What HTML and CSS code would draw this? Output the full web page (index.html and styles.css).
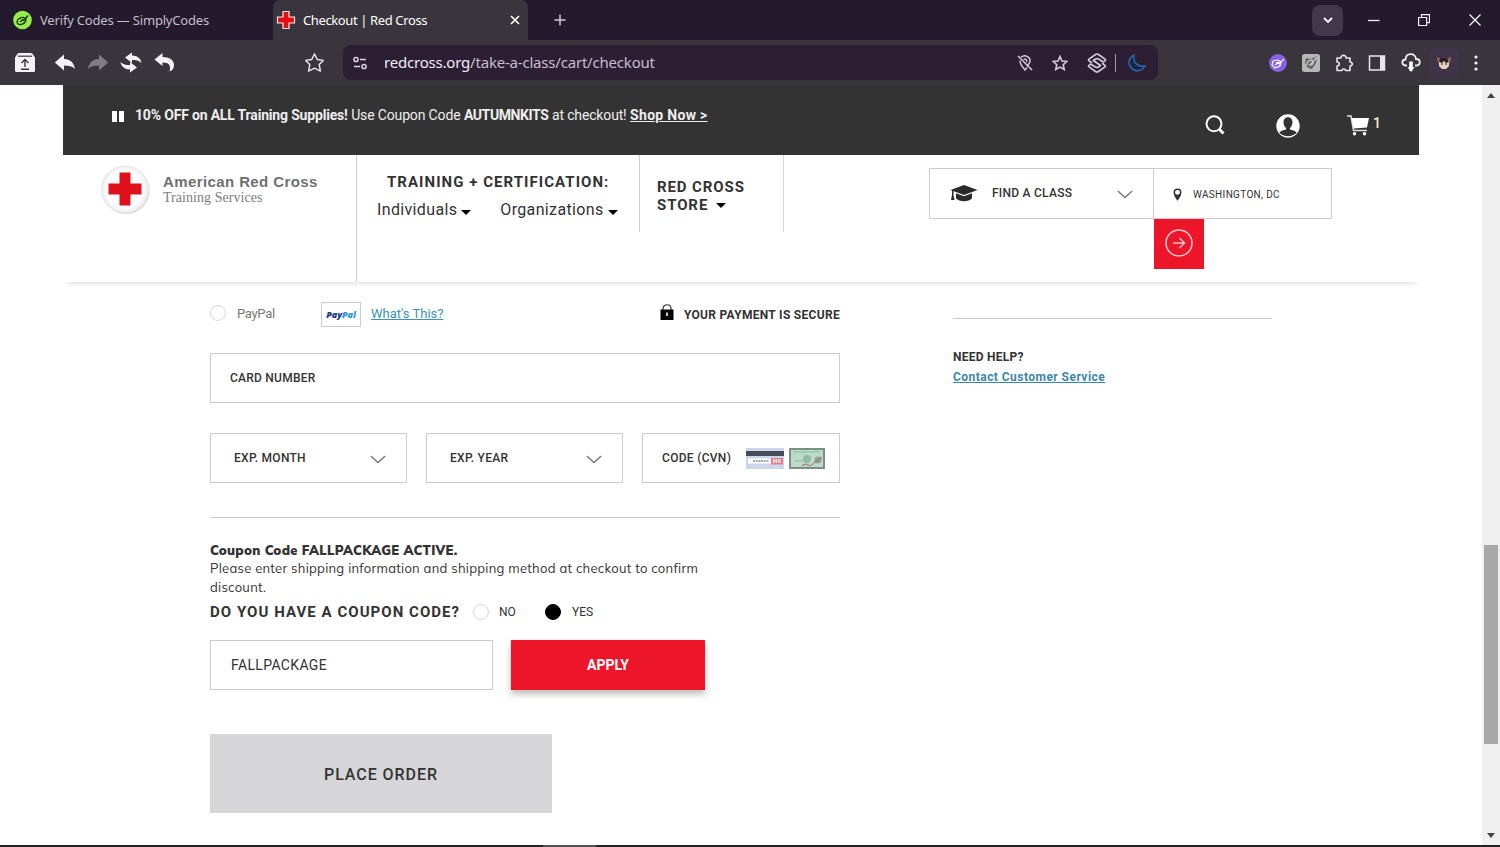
FILE: index.html
```html
<!DOCTYPE html>
<html lang="en">
<head>
<meta charset="utf-8">
<title>Checkout | Red Cross</title>
<link rel="stylesheet" href="styles.css">
</head>
<body>
<div class="window">
  <div class="tabs">
    <div class="tab tab-idle">
      <svg width="20" height="20" viewBox="0 0 20 20"><circle cx="10.500" cy="10" r="9.300" fill="#9aeb4e"/><g fill="none" stroke="#1c3a1c" stroke-width="1.500"><ellipse cx="9.500" cy="11" rx="4.600" ry="3.200" transform="rotate(-25 9.500 11)"/><path d="M8 12l3-2.500 1 1 4-5"/></g></svg>
      <span class="t-simply">Verify Codes — SimplyCodes</span>
    </div>
    <div class="tab tab-active">
      <svg width="20" height="20" viewBox="0 0 20 20"><path d="M7 1.500h6v5.500h5.500v6H13v5.500H7V13H1.500V7H7z" fill="#e80d12" stroke="#fbe9e4" stroke-width="1.200"/></svg>
      <span class="t-check">Checkout | Red Cross</span>
      <svg class="tab-x" width="10" height="10" viewBox="0 0 10 10"><path d="M1 1l8 8M9 1L1 9" stroke="#fff" stroke-width="1.700"/></svg>
    </div>
    <svg class="plus" width="12" height="12" viewBox="0 0 12 12"><path d="M6 .5v11M.5 6h11" stroke="#d0cbd5" stroke-width="1.500"/></svg>
    <div class="controls">
      <span class="tabsearch"><svg width="12" height="8" viewBox="0 0 12 8"><path d="M2 2l4 4 4-4" fill="none" stroke="#fff" stroke-width="1.800"/></svg></span>
      <svg class="min" width="12" height="12" viewBox="0 0 12 12"><path d="M0 6.500h11.500" stroke="#eee" stroke-width="1.300"/></svg>
      <svg class="max" width="12" height="12" viewBox="0 0 12 12"><path d="M.6 3.500h8v8h-8zM3.500 3.500V.7h8v8H8.800" fill="none" stroke="#f5f5f5" stroke-width="1.200"/></svg>
      <svg class="cls" width="12" height="12" viewBox="0 0 12 12"><path d="M.5.5l11 11M11.500.5l-11 11" stroke="#f5f5f5" stroke-width="1.300"/></svg>
    </div>
  </div>
  <div class="toolbar">
    <svg class="ti g-first" viewBox="0 0 22 22"><path d="M5 1h12q1.500 0 2 1.500L21 5.500V18.500q0 1.500-1.500 1.500h-17Q1 20 1 18.500v-13L3 2.500Q3.500 1 5 1z" fill="#f5f2f7"/><path d="M4 4.200h14" stroke="#3a353c" stroke-width="1.200"/><path d="M11 15V8M7.500 11L11 7.500l3.500 3.500M7 17.300h8" fill="none" stroke="#3a353c" stroke-width="1.400"/></svg>
    <svg class="ti g-back" viewBox="0 0 22 22"><path d="M.8 10.500L10 2.500v4.500c6 0 10 3.500 11 10-2.500-2.800-6-3.500-11-3.500v5z" fill="#f5f2f7"/></svg>
    <svg class="ti g-fwd" viewBox="0 0 22 22"><path d="M21.200 10.500L12 2.500v4.500c-6 0-10 3.500-11 10 2.500-2.800 6-3.500 11-3.500v5z" fill="#817c84"/></svg>
    <svg class="ti g-reload" viewBox="0 0 22 22" fill="#f5f2f7"><path d="M5 5.500L12 .5v3c5.500.2 9 3 9.500 7.500C19 8.500 16 8 12 8v3z"/><path d="M17 15.500L10 20.500v-3c-5.500-.2-9-3-9.500-7.500C3 12.500 6 13 10 13v-3z"/></svg>
    <svg class="ti g-undo" viewBox="0 0 22 22"><path d="M.5 7.500L8.500 1v4c7 0 11.500 3 11.500 8 0 3.500-1.500 5.500-4.500 6.500 1.500-6 0-9-7-9v3.500z" fill="#f5f2f7"/></svg>
    <svg class="ti g-star" viewBox="0 0 22 22"><path d="M11 2l2.900 5.900 6.300.9-4.300 4.300 1.300 6.900L11 17l-6.200 3 1.300-6.900-4.300-4.300 6.300-.9z" fill="none" stroke="#eae6ed" stroke-width="1.500" stroke-linejoin="round"/></svg>
    <div class="url">
      <svg class="tune" width="14" height="14" viewBox="0 0 14 14" fill="none" stroke="#d9d1e0" stroke-width="1.500"><circle cx="3" cy="3.500" r="2.100"/><path d="M7 3.500h6M1 10.500h6"/><circle cx="11" cy="10.500" r="2.100"/></svg>
      <span class="addr"><b>redcross.org</b>/take-a-class/cart/checkout</span>
      <span class="url-icons">
        <svg width="16" height="18" viewBox="0 0 16 18" fill="none" stroke="#d3cadb" stroke-width="1.500"><path d="M4 3.200C8 0 13.500 3 13 7.200c-.3 2-1.500 3.700-3 5.300M3 6.500c0 4 2.500 6.500 5 9.500l2-2.500"/><path d="M6.500 5.500c2-1.500 4 .5 3 2.500M1 2l14 14"/></svg>
        <svg width="16" height="16" viewBox="0 0 22 22"><path d="M11 2l2.700 6.300 6.800.6-5.100 4.500 1.500 6.600L11 16.600 5.100 20l1.500-6.600L1.500 8.900l6.800-.6z" fill="none" stroke="#d3cadb" stroke-width="2.200"/></svg>
        <svg width="20" height="20" viewBox="0 0 20 20" fill="none" stroke="#d3cadb" stroke-width="1.600" stroke-linejoin="round" stroke-linecap="round"><path d="M4.500 9.500L2 7.800q-1-.8 0-1.600L8.500 1.500q1.500-.9 3 0L18 6.200q1 .8 0 1.600L16.500 9 11.500 6q-1.500-.8-3 0L6.500 7.500"/><path d="M15.500 10.500L18 12.300q1 .8 0 1.600l-6.500 4.600q-1.500.9-3 0L2 13.900q-1-.8 0-1.600L3.500 11l5 3q1.500.8 3 0l2-1.500M6.500 7.500l7 5"/></svg>
        <i class="vline"></i>
        <svg class="moon" width="18" height="18" viewBox="0 0 18 18"><path d="M6 1.200C4.500 8 9 13 17 12c-2 4.500-7.500 6-11.800 3.500C-.5 12-.3 4 6 1.200z" fill="#18264a" stroke="#2c69aa" stroke-width="1.500"/></svg>
      </span>
    </div>
    <div class="ext">
      <svg width="18" height="18" viewBox="0 0 18 18"><circle cx="9" cy="9" r="9" fill="#8661e5"/><g fill="none" stroke="#fff" stroke-width="1.100"><path d="M4 7l5-1 3 2-1 4-5 2-3-3z"/><path d="M6 11l3-2 1 1 5-5M7 8.500h3"/></g></svg>
      <svg width="18" height="18" viewBox="0 0 18 18"><rect width="18" height="18" rx="2.500" fill="#b8b7b8"/><path d="M4 4l5 1 6-3-1 7-4 6-4-1-3-5z" fill="#646466"/><path d="M5 11c0-6 5-5 6-4s0 4-3 4l7-8" fill="none" stroke="#c4c4c4" stroke-width="1.500"/></svg>
      <svg width="18" height="18" viewBox="0 0 18 18"><path d="M2 4h4c-.5-3.500 5.500-3.500 5 0h4v4c3 0 3 4 0 4v4.500h-4.500c0-2-3.500-2-3.500 0H2V12c3 0 3-4 0-4z" fill="none" stroke="#e9e5ec" stroke-width="1.600" stroke-linejoin="round"/></svg>
      <svg width="18" height="18" viewBox="0 0 18 18"><path d="M1.500 2h15v14h-15z" fill="none" stroke="#e9e5ec" stroke-width="1.500"/><path d="M12 2h5v14h-5z" fill="#e9e5ec"/></svg>
      <svg width="20" height="20" viewBox="0 0 20 20"><path d="M6 12.500H4.500C0 12 .5 6.500 4.500 6.500 5-.5 14-.5 15 6c5 0 5 6.500 0 6.500h-1" fill="none" stroke="#eee" stroke-width="1.800"/><path d="M10 8.500v9" stroke="#fff" stroke-width="3.600"/><path d="M6.500 14h7L10 19z" fill="#fff"/></svg>
      <span class="avatar"><svg width="14" height="14" viewBox="0 0 14 14"><path d="M0 1l4 2h6l4-2-1 6H1z" fill="#a76550"/><path d="M3 2h7l2 5H2z" fill="#2b2029"/><path d="M2 6l3 1 2-2 2 2 3-1v4l-3 3H5l-3-3z" fill="#ead3bd"/><circle cx="5" cy="8" r=".8"/><circle cx="9" cy="8" r=".8"/></svg></span>
      <svg class="dots" width="4" height="16" viewBox="0 0 4 16" fill="#f4f4f4"><circle cx="2" cy="2" r="1.600"/><circle cx="2" cy="8" r="1.600"/><circle cx="2" cy="14" r="1.600"/></svg>
    </div>
  </div>
  <div class="view">
    <main class="page">
      <header class="site">
        <div class="promo">
          <i class="pause"></i>
          <p><b class="p1">10% OFF on ALL Training Supplies!</b> <span class="p2">Use Coupon Code</span> <b class="p3">AUTUMNKITS</b> <span class="p4">at checkout!</span> <a class="p5">Shop Now &gt;</a></p>
          <div class="acct">
            <svg width="20" height="20" viewBox="0 0 20 20" fill="none" stroke="#fff"><circle cx="9" cy="8.800" r="7.500" stroke-width="2"/><path d="M14 14l4.500 4.500" stroke-width="3"/></svg>
            <svg class="user" width="24" height="24" viewBox="0 0 24 24"><circle cx="12" cy="12" r="11.700" fill="#fff"/><path d="M7.500 8c0-6.500 9-6.500 9 0 0 3-1.200 5-2.500 6v1.500c2 .8 5.500 1 6.800 3.200C16 23.300 8 23.300 3.200 18.700c1.300-2.200 4.800-2.400 6.800-3.200V14C8.700 13 7.500 11 7.500 8z" fill="#333"/></svg>
            <svg class="cart" width="22" height="21" viewBox="0 0 22 21"><path d="M0 1h4l2.500 14.500H20" fill="none" stroke="#ddd" stroke-width="1.500"/><path d="M4.500 3H22l-2 9.500L6.500 13.500z" fill="#fff"/><circle cx="7.500" cy="18.700" r="1.700" fill="#fff"/><circle cx="17.500" cy="18.700" r="1.700" fill="#fff"/></svg>
            <span class="count">1</span>
          </div>
        </div>
        <div class="nav">
          <div class="brand">
            <svg width="52" height="52" viewBox="0 0 52 52"><defs><radialGradient id="disc"><stop offset=".75" stop-color="#fff"/><stop offset=".93" stop-color="#f0f0f0"/><stop offset="1" stop-color="#e4e4e4"/></radialGradient></defs><circle cx="27" cy="26.500" r="23.500" fill="#d4d4d4"/><circle cx="26" cy="25.300" r="24" fill="url(#disc)"/><path d="M20.500 8.500h11v11H42.500v11h-11v11h-11v-11H9.500v-11h11z" fill="#e0101a"/></svg>
            <div class="brand-text"><strong>American Red Cross</strong><span>Training Services</span></div>
          </div>
          <div class="training">
            <b>TRAINING + CERTIFICATION:</b>
            <div class="links"><span class="ind">Individuals<i class="caret"></i></span><span class="org">Organizations<i class="caret"></i></span></div>
          </div>
          <div class="store"><span>RED CROSS</span><span>STORE<i class="caret"></i></span></div>
          <div class="finder">
            <div class="find">
              <svg width="28" height="18" viewBox="0 0 28 18" fill="#2b2b2b"><path d="M14 1l13.500 5L14 11 .5 6z"/><path d="M6 9.200l8 3 8-3v5c-3 4-13 4-16 0zM2 6h1.500v5l1 5H1l1-5z"/></svg>
              <span>FIND A CLASS</span>
              <svg class="chev" width="16" height="9" viewBox="0 0 16 9"><path d="M.8 1L8 7.500 15.200 1" fill="none" stroke="#777" stroke-width="1.400"/></svg>
            </div>
            <div class="where">
              <svg width="9" height="13" viewBox="0 0 9 13"><path d="M4.500 1.200c4.500 0 4 5 0 10.300-4-5.300-4.500-10.300 0-10.300z" fill="#fff" stroke="#333" stroke-width="1.600"/><path d="M1.500 6.500h6l-3 5.500z" fill="#333"/></svg>
              <span>WASHINGTON, DC</span>
            </div>
            <div class="go"><svg width="28" height="28" viewBox="0 0 28 28" fill="none" stroke="#ffc9cd" stroke-width="1.500"><circle cx="14" cy="14" r="13"/><path d="M8 14h11.500M14.500 9l5 5-5 5"/></svg></div>
          </div>
        </div>
      </header>
      <div class="checkout">
        <section class="form">
          <div class="pay">
            <i class="radio"></i><span class="pp">PayPal</span>
            <span class="pplogo"><em>Pay</em><em class="pal">Pal</em></span>
            <a class="what">What's This?</a>
            <svg class="lock" width="14" height="16" viewBox="0 0 14 16"><path d="M3 7V4.500c0-5 8-5 8 0V7" fill="none" stroke="#333" stroke-width="1.200"/><path d="M.5 5.500h13V16H.5z"/><path d="M6.200 8.500h1.600V12H6.200z" fill="#fff"/></svg>
            <b class="secure">YOUR PAYMENT IS SECURE</b>
          </div>
          <div class="field card"><span>CARD NUMBER</span></div>
          <div class="trio">
            <div class="field exp"><span class="em">EXP. MONTH</span><svg width="16" height="9" viewBox="0 0 16 9"><path d="M.8 1L8 7.500 15.200 1" fill="none" stroke="#777" stroke-width="1.400"/></svg></div>
            <div class="field exp"><span class="ey">EXP. YEAR</span><svg width="16" height="9" viewBox="0 0 16 9"><path d="M.8 1L8 7.500 15.200 1" fill="none" stroke="#777" stroke-width="1.400"/></svg></div>
            <div class="field cvn"><span>CODE (CVN)</span>
              <svg width="38" height="21" viewBox="0 0 38 21"><path fill="#cbd6ec" d="M0 0h38v21H0z"/><path fill="#454b57" d="M0 3h38v5H0z"/><path fill="#fff" d="M2 10.500h23v5H2z"/><path d="M7 13h16" stroke="#888" stroke-width="1.500" stroke-dasharray="2 .7"/><path fill="#df7f87" d="M25 10h12v6.500H25z"/><path d="M27 13h8" stroke="#fff" stroke-width="3.500" stroke-dasharray="1.500 1"/></svg>
              <svg class="amex" width="36" height="21" viewBox="0 0 36 21"><path fill="#bcdcc9" stroke="#7b9187" stroke-width="2" d="M1 1h34v19H1z"/><path d="M4 4h27M6 13h8" stroke="#8fb3a0"/><circle cx="18" cy="11" r="4" fill="#92b9a3"/><circle cx="29" cy="12" r="3.500" fill="#88a596"/><path d="M13 18q3-3 6-1t6-2l4-3 4-3" fill="none" stroke="#b17d78" stroke-width="1.200"/></svg>
            </div>
          </div>
          <hr>
          <div class="notice"><b>Coupon Code FALLPACKAGE ACTIVE.</b><span class="n1">Please enter shipping information and shipping method at checkout to confirm</span><span class="n2">discount.</span></div>
          <div class="ask"><b>DO YOU HAVE A COUPON CODE?</b><i class="radio"></i><span class="no">NO</span><i class="radio on"></i><span class="yes">YES</span></div>
          <div class="apply-row"><div class="field code"><span>FALLPACKAGE</span></div><div class="apply"><span>APPLY</span></div></div>
          <div class="place"><span>PLACE ORDER</span></div>
        </section>
        <aside><b>NEED HELP?</b><a>Contact Customer Service</a></aside>
      </div>
    </main>
    <div class="scroll"><i class="up"></i><i class="thumb"></i><i class="down"></i></div>
  </div>
  <div class="taskline"></div>
</div>
</body>
</html>
```
FILE: styles.css
```css
* { box-sizing: border-box; }
body { margin: 0; overflow: hidden; font-family: Roboto, "Liberation Sans", sans-serif; color: #333; }
svg { display: block; flex: none; }
i { display: block; flex: none; }
span, b, a, strong, p { white-space: nowrap; }
.window { width: 1500px; height: 847px; display: flex; flex-direction: column; background: #fff; }

.tabs { height: 40px; background: #231a2d; display: flex; align-items: center; font-family: "Noto Sans", sans-serif; font-size: 13px; }
.tab { display: flex; align-items: center; height: 40px; }
.tab-idle { width: 273px; padding-left: 12px; gap: 8px; color: #c4bfc9; }
.tab-active { width: 255px; padding-left: 3px; gap: 7px; background: #3a353c; border-radius: 7px 7px 0 0; color: #fff; }
.t-simply { letter-spacing: -.18px; }
.t-check { letter-spacing: -.38px; }
.tab-x { margin-left: auto; margin-right: 8px; }
.plus { margin-left: 26px; }
.controls { margin-left: auto; display: flex; align-items: center; }
.tabsearch { width: 31px; height: 31px; border-radius: 8px; background: #42384c; display: grid; place-items: center; }
.min { margin-left: 25px; }
.max { margin-left: 38px; }
.cls { margin-left: 39px; margin-right: 19px; }

.toolbar { height: 45px; background: #3a353c; display: flex; align-items: center; }
.ti { width: 22px; height: 22px; }
.g-first { margin-left: 14px; }
.g-back { margin-left: 18px; }
.g-fwd { margin-left: 11px; }
.g-reload { margin-left: 11px; }
.g-undo { margin-left: 12px; }
.g-star { margin-left: 128px; width: 21px; height: 21px; }
.url { margin-left: 18px; width: 815px; height: 35px; border-radius: 8px; background: #2c1f34; display: flex; align-items: center; padding: 0 12px 0 10px; }
.addr { margin-left: 17px; font-family: "Noto Sans", sans-serif; font-size: 15px; line-height: 20px; color: #c6becd; letter-spacing: -.2px; padding-bottom: 2px; }
.addr b { font-weight: 400; color: #f1ecf5; }
.url-icons { margin-left: auto; display: flex; align-items: center; gap: 19px; }
.url-icons .vline { width: 1px; height: 18px; background: #a499ad; margin-left: -11px; }
.url-icons .moon { margin-left: -7px; }
.ext { margin-left: auto; display: flex; align-items: center; gap: 15px; padding-right: 22px; }
.avatar { width: 30px; height: 30px; border-radius: 7px; background: #3f344a; display: grid; place-items: center; margin-left: -7px; }

.view { flex: 1; display: flex; min-height: 0; }
.page { flex: 1; min-width: 0; overflow: hidden; }
.site { width: 1356px; margin-left: 63px; }
.promo { height: 70px; background: #333; color: #fff; display: flex; align-items: flex-start; padding-left: 49px; }
.pause { margin-top: 26px; width: 12px; height: 11px; border: solid #fff; border-width: 0 5px; }
.promo p { margin: 21px 0 0 11px; font-size: 14px; line-height: 19px; width: 574px; color: #eee; }
.p1 { letter-spacing: -.18px; }
.p2, .p4 { letter-spacing: -.15px; }
.p3 { letter-spacing: -.4px; }
.p5 { font-weight: 700; text-decoration: underline; letter-spacing: .3px; }
.acct { margin-left: auto; display: flex; align-items: flex-start; padding-right: 38px; padding-top: 30px; }
.user { margin: -1px 0 0 51px; }
.cart { margin: 0 0 0 47px; }
.count { margin: -1px 0 0 4px; font-size: 14px; line-height: 18px; font-weight: 500; color: #f4eecb; }

.nav { height: 127px; display: flex; align-items: flex-start; background: #fff; box-shadow: 0 5px 5px -3px rgba(0,0,0,.11); }
.brand { width: 294px; height: 127px; border-right: 1px solid #ccc; padding: 9px 0 0 36px; display: flex; }
.brand-text { padding: 9px 0 0 12px; display: flex; flex-direction: column; }
.brand-text strong { font-family: "Liberation Sans", sans-serif; font-size: 15px; line-height: 18px; color: #707070; letter-spacing: .4px; }
.brand-text span { font-family: "Liberation Serif", serif; font-size: 14px; line-height: 14px; color: #7d7d7d; letter-spacing: .05px; }
.training { width: 283px; height: 77px; border-right: 1px solid #ccc; padding: 17px 0 0 20px; }
.training b { display: block; margin-left: 10px; font-size: 15px; line-height: 20px; letter-spacing: 1.040px; }
.links { display: flex; margin-top: 9px; font-size: 16px; line-height: 18px; letter-spacing: .35px; gap: 29px; }
.links span, .store span { display: flex; align-items: center; }
.caret { border: 5px solid transparent; border-top-color: #000; border-bottom: 0; margin: 4px 0 0 4px; }
.store { width: 144px; height: 77px; border-right: 1px solid #d8d8d8; padding: 23px 0 0 17px; font-weight: 700; font-size: 15px; line-height: 18px; letter-spacing: .9px; }
.store .caret { margin: 1px 0 0 8px; }
.finder { margin: 13px 0 0 145px; display: grid; grid-template-columns: 225px 178px; grid-template-rows: 51px 50px; }
.find, .where { border: 1px solid #ccc; display: flex; align-items: center; }
.find { padding: 0 20px 2px 20px; font-size: 12px; font-weight: 500; }
.find span { margin-left: 14px; letter-spacing: .25px; }
.find .chev { margin: 4px 0 0 auto; }
.where { border-left: 0; padding: 1px 0 0 19px; font-size: 10px; }
.where span { margin-left: 11px; letter-spacing: .33px; }
.go { grid-column: 2; width: 50px; height: 50px; background: #ed1529; display: grid; place-items: center; padding-bottom: 2px; }

.checkout { display: flex; padding-left: 210px; }
.form { width: 630px; padding-top: 19px; }
.pay { height: 26px; display: flex; align-items: center; font-size: 13px; }
.pay .radio, .pp, .what { margin-bottom: 2px; }
.radio { width: 16px; height: 16px; border: 1px solid #d8d8d8; border-radius: 50%; }
.radio.on { background: #000; border-color: #000; }
.pp { margin-left: 11px; width: 84px; color: #777; letter-spacing: -.3px; }
.pplogo { width: 40px; height: 25px; border: 1px solid #ccc; display: flex; align-items: center; justify-content: center; font: italic 800 9px "Open Sans", sans-serif; letter-spacing: -.05px; color: #1b3a80; padding-top: 1px; }
.pal { color: #2798d5; }
.what { margin-left: 10px; color: #3b93b5; text-decoration: underline; letter-spacing: 0; }
.lock { margin: -5px 0 0 auto; }
.secure { margin-left: 10px; font-size: 12px; letter-spacing: .3px; line-height: 16px; margin-top: 2px; }
.field { border: 1px solid #ccc; display: flex; align-items: center; height: 50px; font-size: 12px; font-weight: 500; }
.card { margin-top: 26px; padding: 0 0 1px 19px; letter-spacing: .24px; }
.trio { display: grid; grid-template-columns: 197px 197px 198px; gap: 19px; margin-top: 30px; }
.exp { padding: 0 20px 1px 23px; letter-spacing: .27px; }
.exp svg { margin: 4px 0 0 auto; }
.cvn { padding: 0 0 1px 19px; letter-spacing: .3px; }
.cvn svg { margin: 1px 0 0 15px; }
.cvn .amex { margin-left: 5px; }
hr { border: 0; height: 1px; background: #ccc; margin: 34px 0 0; }
.notice { font-family: Muli, Mulish, Lato, sans-serif; font-size: 13px; display: flex; flex-direction: column; margin-top: 23px; line-height: 18.500px; }
.notice b { line-height: 18px; font-weight: 900; letter-spacing: .27px; }
.n1, .n2 { letter-spacing: .26px; }
.ask { display: flex; align-items: center; margin-top: 5px; height: 22px; font-size: 12px; }
.ask b { font-size: 15px; letter-spacing: 1.040px; width: 263px; }
.no { margin-left: 10px; width: 46px; }
.yes { margin-left: 11px; }
.apply-row { display: flex; gap: 18px; margin-top: 17px; }
.code { width: 283px; padding-left: 20px; font-size: 14px; font-weight: 400; letter-spacing: .35px; }
.apply { width: 194px; height: 50px; background: #ed1529; color: #fff; display: grid; place-items: center; font-size: 14px; font-weight: 700; box-shadow: 0 4px 7px rgba(0,0,0,.28); }
.place { width: 342px; height: 79px; margin-top: 44px; padding-top: 2px; background: #d6d6d8; display: grid; place-items: center; font-size: 16px; font-weight: 500; letter-spacing: .95px; }
aside { margin: 36px 0 0 113px; width: 319px; height: 100px; border-top: 1px solid #ccc; padding-top: 28px; display: flex; flex-direction: column; font-size: 12px; line-height: 20px; }
aside b { letter-spacing: .25px; }
aside a { color: #3b87ab; font-weight: 700; text-decoration: underline; letter-spacing: .46px; }

.scroll { width: 18px; background: #f0f0f0; display: flex; flex-direction: column; align-items: center; }
.up { border: 4px solid transparent; border-bottom: 5px solid #444; border-top: 0; margin-top: 8px; }
.thumb { width: 14px; height: 199px; background: #a8a8a8; margin-top: 447px; }
.down { border: 4px solid transparent; border-top: 5px solid #444; border-bottom: 0; margin-top: 89px; }
.taskline { height: 2px; background: linear-gradient(90deg, #222 543px, #555 543px 596px, #222 596px); }
```
